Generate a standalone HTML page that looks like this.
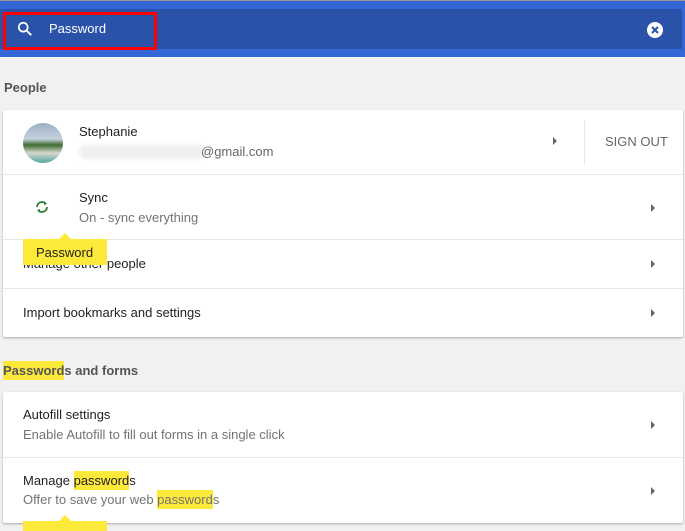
<!DOCTYPE html>
<html><head><style>
body{margin:0;width:685px;height:525px;overflow:hidden;background:#f1f1f1;font-family:"Liberation Sans",sans-serif;position:relative}
.top{position:absolute;left:0;top:0;width:685px;height:57px;background:#3367d6;border-top:1px solid #999;box-sizing:border-box}
.inner{position:absolute;left:0;top:8px;width:682px;height:40px;background:#2a52a8}
.red{position:absolute;left:3px;top:11px;width:148px;height:32px;border:3px solid #f00}
.card{position:absolute;left:3px;width:680px;background:#fff;box-shadow:0 1px 2px rgba(0,0,0,.3);border-radius:2px}
.row{position:absolute;left:0;width:680px;border-top:1px solid #e6e6e6}
.t{position:absolute;font-size:13px;color:#222}
.s{position:absolute;font-size:13px;color:#737373}
.arr{position:absolute;right:28px;width:0;height:0;border-left:4px solid #666;border-top:4px solid transparent;border-bottom:4px solid transparent}
.h{position:absolute;left:4px;font-size:13px;font-weight:bold;color:#555}
mark{background:#fde93a;color:inherit;padding:2px 0}
</style></head><body>
<div class="top"><div class="inner"></div>
<svg style="position:absolute;left:17px;top:20px" width="16" height="16" viewBox="0 0 18 18"><circle cx="7" cy="7" r="5" fill="none" stroke="#fff" stroke-width="2"/><path d="M10.5 10.5L16 16" stroke="#fff" stroke-width="2.2"/></svg>
<div style="position:absolute;left:49px;top:20px;font-size:13px;color:#fff">Password</div>
<div class="red"></div>
<svg style="position:absolute;left:646px;top:20px" width="18" height="18" viewBox="0 0 18 18"><circle cx="9" cy="9" r="8" fill="#fff"/><path d="M6 6L12 12M12 6L6 12" stroke="#2a52a8" stroke-width="2"/></svg>
</div>
<div class="h" style="top:80px">People</div>
<div class="card" style="top:110px;height:227px">
<div style="position:absolute;left:20px;top:13px;width:40px;height:40px;border-radius:50%;background:linear-gradient(#9bb0c6 0%,#c5d2dc 40%,#3e6b32 55%,#d8d8d0 75%,#4fa5a0 100%)"></div>
<div class="t" style="left:76px;top:14px">Stephanie</div>
<div style="position:absolute;left:76px;top:35px;width:125px;height:14px;background:#eee;border-radius:7px;filter:blur(2px)"></div>
<div class="s" style="left:198px;top:34px;color:#666">@gmail.com</div>
<div class="arr" style="right:126px;top:27px"></div>
<div style="position:absolute;left:581px;top:10px;width:1px;height:44px;background:#e6e6e6"></div>
<div class="s" style="left:602px;top:24px;color:#666">SIGN OUT</div>
<div class="row" style="top:64px;height:65px">
<svg style="position:absolute;left:32px;top:24px" width="14" height="16" viewBox="0 0 14 16"><path d="M2 8A5 5 0 0 1 10.5 4.5M12 8A5 5 0 0 1 3.5 11.5" fill="none" stroke="#2e7d32" stroke-width="1.8"/><path d="M9 2L12 5L9 6Z M5 14L2 11L5 10Z" fill="#2e7d32"/></svg>
<div class="t" style="left:76px;top:15px">Sync</div>
<div class="s" style="left:76px;top:35px">On - sync everything</div>
<div class="arr" style="top:29px"></div></div>
<div class="row" style="top:129px;height:48px">
<div class="t" style="left:20px;top:16px">Manage other people</div>
<div class="arr" style="top:20px"></div></div>
<div class="row" style="top:178px;height:48px">
<div class="t" style="left:20px;top:16px">Import bookmarks and settings</div>
<div class="arr" style="top:20px"></div></div>
</div>
<div style="position:absolute;left:23px;top:239px;width:84px;height:26px;background:#fde93a"></div>
<div style="position:absolute;left:59px;top:233px;width:0;height:0;border-left:6px solid transparent;border-right:6px solid transparent;border-bottom:6px solid #fde93a"></div>
<div class="t" style="left:36px;top:245px">Password</div>
<div class="h" style="top:363px;left:3px"><mark>Password</mark>s and forms</div>
<div class="card" style="top:392px;height:131px">
<div class="t" style="left:20px;top:15px">Autofill settings</div>
<div class="s" style="left:20px;top:35px">Enable Autofill to fill out forms in a single click</div>
<div class="arr" style="top:29px"></div>
<div class="row" style="top:65px;height:66px">
<div class="t" style="left:20px;top:15px">Manage <mark>password</mark>s</div>
<div class="s" style="left:20px;top:34px">Offer to save your web <mark>password</mark>s</div>
<div class="arr" style="top:29px"></div></div>
</div>
<div style="position:absolute;left:23px;top:521px;width:84px;height:10px;background:#fde93a"></div>
<div style="position:absolute;left:59px;top:515px;width:0;height:0;border-left:6px solid transparent;border-right:6px solid transparent;border-bottom:6px solid #fde93a"></div>
</body></html>
